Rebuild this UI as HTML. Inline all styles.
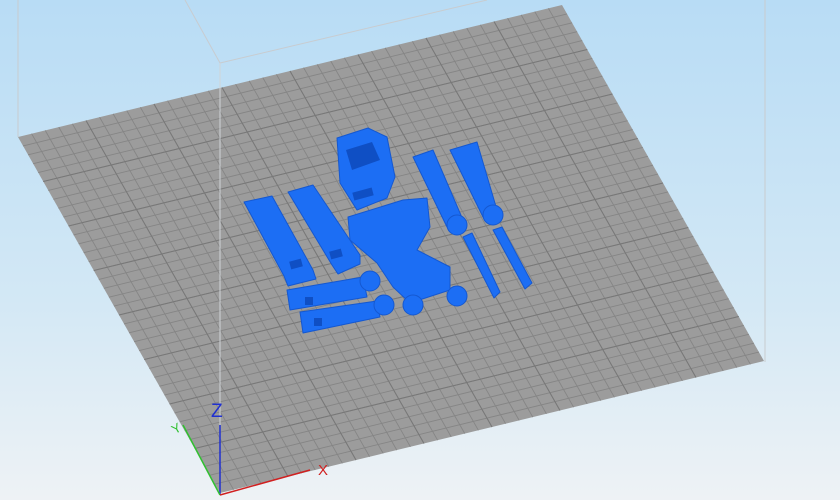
<!DOCTYPE html>
<html><head><style>
html,body{margin:0;padding:0;width:840px;height:500px;overflow:hidden}
svg{display:block}
</style></head><body>
<svg width="840" height="500" viewBox="0 0 840 500" xmlns="http://www.w3.org/2000/svg">
<defs>
<linearGradient id="bg" x1="0" y1="0" x2="0" y2="1">
<stop offset="0" stop-color="#b8dcf5"/><stop offset="0.6" stop-color="#d3e8f5"/><stop offset="1" stop-color="#eef2f5"/>
</linearGradient>
</defs>
<rect width="840" height="500" fill="url(#bg)"/>
<g stroke="#c8ccd0" stroke-width="1" fill="none">
<line x1="18" y1="0" x2="18" y2="137"/>
<line x1="765" y1="0" x2="765" y2="362"/>
<line x1="185" y1="0" x2="220" y2="63"/>
<line x1="220" y1="63" x2="487" y2="0"/>
</g>
<g transform="matrix(544,-132,202,356,18,137)">
<rect x="0" y="0" width="1" height="1" fill="#9c9c9c"/>
<path vector-effect="non-scaling-stroke" stroke="#858585" stroke-width="0.9" fill="none" d="M0 .025H1M0 .05H1M0 .075H1M0 .1H1M0 .125H1M0 .15H1M0 .175H1M0 .2H1M0 .225H1M0 .25H1M0 .275H1M0 .3H1M0 .325H1M0 .35H1M0 .375H1M0 .4H1M0 .425H1M0 .45H1M0 .475H1M0 .5H1M0 .525H1M0 .55H1M0 .575H1M0 .6H1M0 .625H1M0 .65H1M0 .675H1M0 .7H1M0 .725H1M0 .75H1M0 .775H1M0 .8H1M0 .825H1M0 .85H1M0 .875H1M0 .9H1M0 .925H1M0 .95H1M0 .975H1M.025 0V1M.05 0V1M.075 0V1M.1 0V1M.125 0V1M.15 0V1M.175 0V1M.2 0V1M.225 0V1M.25 0V1M.275 0V1M.3 0V1M.325 0V1M.35 0V1M.375 0V1M.4 0V1M.425 0V1M.45 0V1M.475 0V1M.5 0V1M.525 0V1M.55 0V1M.575 0V1M.6 0V1M.625 0V1M.65 0V1M.675 0V1M.7 0V1M.725 0V1M.75 0V1M.775 0V1M.8 0V1M.825 0V1M.85 0V1M.875 0V1M.9 0V1M.925 0V1M.95 0V1M.975 0V1"/>
<path vector-effect="non-scaling-stroke" stroke="#787878" stroke-width="1" fill="none" d="M0 .125H1M0 .25H1M0 .375H1M0 .5H1M0 .625H1M0 .75H1M0 .875H1M.125 0V1M.25 0V1M.375 0V1M.5 0V1M.625 0V1M.75 0V1M.875 0V1"/>
</g>
<line x1="220" y1="63" x2="220" y2="495" stroke="#d0d4d8" stroke-width="1"/>
<g fill="#1c6ef4" stroke="#1558d0" stroke-width="1" stroke-linejoin="round">
<polygon points="244,202 272,196 313,270 316,279 288,286 284,276"/>
<polygon points="288,192 313,185 360,255 360,264 338,274 332,265"/>
<polygon points="337,138 368,128 387,137 395,177 387,198 357,210 340,183"/>
<polygon points="348,217 403,200 427,198 430,227 417,250 450,267 450,290 410,303 393,287 377,263 350,240"/>
<polygon points="413,157 433,150 463,220 447,227"/>
<polygon points="450,150 477,142 497,210 483,217"/>
<polygon points="463,237 472,233 500,292 494,298"/>
<polygon points="493,230 502,227 532,283 525,289"/>
<polygon points="287,290 363,277 367,297 290,310"/>
<polygon points="300,312 377,301 380,317 303,333"/>
<circle cx="457" cy="225" r="10"/>
<circle cx="493" cy="215" r="10"/>
<circle cx="370" cy="281" r="10"/>
<circle cx="384" cy="305" r="10"/>
<circle cx="413" cy="305" r="10"/>
<circle cx="457" cy="296" r="10"/>
</g>
<g fill="#0f4fc4">
<polygon points="346,150 372,142 380,160 352,170"/>
<rect x="353" y="190" width="20" height="8" transform="rotate(-15 363 194)"/>
<rect x="290" y="260" width="12" height="8" transform="rotate(-15 296 264)"/>
<rect x="330" y="250" width="12" height="8" transform="rotate(-15 336 254)"/>
<rect x="305" y="297" width="8" height="8"/>
<rect x="314" y="318" width="8" height="8"/>
</g>
<line x1="220" y1="495" x2="220" y2="425" stroke="#2030d0" stroke-width="1.5"/>
<line x1="220" y1="495" x2="183" y2="425" stroke="#30c030" stroke-width="1.5"/>
<line x1="220" y1="495" x2="310" y2="470" stroke="#d02020" stroke-width="1.5"/>
<text x="211" y="417" font-family="Liberation Sans, sans-serif" font-size="19" fill="#2030d0">Z</text>
<text x="172" y="432" font-family="Liberation Sans, sans-serif" font-size="13" fill="#30c030" transform="rotate(-30 178 428)">Y</text>
<text x="318" y="475" font-family="Liberation Sans, sans-serif" font-size="15" fill="#d02020">X</text>
</svg>
</body></html>
